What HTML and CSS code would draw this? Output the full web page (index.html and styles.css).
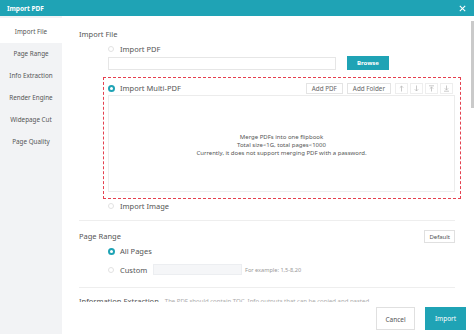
FILE: index.html
```html
<!DOCTYPE html>
<html>
<head>
<meta charset="utf-8">
<link rel="stylesheet" href="styles.css">
</head>
<body>
<div class="window">
  <div class="titlebar">
    <span class="title">Import PDF</span>
    <svg class="close" width="7" height="7" viewBox="0 0 7 7"><path d="M0.8 0.8L6.2 6.2M6.2 0.8L0.8 6.2" stroke="#fff" stroke-width="1.1"/></svg>
  </div>
  <div class="body">
    <div class="sidebar">
      <div class="nav-item active">Import File</div>
      <div class="nav-item">Page Range</div>
      <div class="nav-item">Info Extraction</div>
      <div class="nav-item">Render Engine</div>
      <div class="nav-item">Widepage Cut</div>
      <div class="nav-item">Page Quality</div>
    </div>
    <div class="main">
      <div class="scroll">
        <div class="section-title">Import File</div>
        <div class="radio-row indent"><span class="radio"></span>Import PDF</div>
        <div class="file-row indent">
          <div class="file-input"></div>
          <div class="btn-primary-sm">Browse</div>
        </div>
        <div class="dashed">
          <div class="multi-head">
            <span class="radio checked"></span><span class="radio-text">Import Multi-PDF</span>
            <div class="tools">
              <span class="tool-btn">Add PDF</span>
              <span class="tool-btn">Add Folder</span>
              <span class="icon-btn"><svg width="7" height="7" viewBox="0 0 7 7"><path d="M3.5 6.5V1M1.8 2.7L3.5 1L5.2 2.7" stroke="#bbb" stroke-width="0.8" fill="none"/></svg></span>
              <span class="icon-btn"><svg width="7" height="7" viewBox="0 0 7 7"><path d="M3.5 0.5V6M1.8 4.3L3.5 6L5.2 4.3" stroke="#bbb" stroke-width="0.8" fill="none"/></svg></span>
              <span class="icon-btn"><svg width="7" height="7" viewBox="0 0 7 7"><path d="M1 0.8H6M3.5 6.5V2M1.8 3.7L3.5 2L5.2 3.7" stroke="#bbb" stroke-width="0.8" fill="none"/></svg></span>
              <span class="icon-btn"><svg width="7" height="7" viewBox="0 0 7 7"><path d="M1 6.2H6M3.5 0.5V5M1.8 3.3L3.5 5L5.2 3.3" stroke="#bbb" stroke-width="0.8" fill="none"/></svg></span>
            </div>
          </div>
          <div class="list-box">
            <p>Merge PDFs into one flipbook</p>
            <p>Total size&lt;1G, total pages&lt;1000</p>
            <p>Currently, it does not support merging PDF with a password.</p>
          </div>
        </div>
        <div class="radio-row indent img-row"><span class="radio"></span>Import Image</div>
        <div class="divider d1"></div>
        <div class="range-head">
          <span class="section-label">Page Range</span>
          <span class="btn-default">Default</span>
        </div>
        <div class="radio-row indent all-row"><span class="radio checked"></span>All Pages</div>
        <div class="radio-row indent custom-row"><span class="radio"></span><span class="custom-label">Custom</span><span class="custom-input"></span><span class="hint">For example: 1,5-8,20</span></div>
        <div class="divider d2"></div>
        <div class="info-row"><span class="info-label">Information Extraction</span><span class="info-hint">The PDF should contain TOC, Info outputs that can be copied and pasted.</span></div>
      </div>
      <div class="footer">
        <span class="btn-cancel">Cancel</span>
        <span class="btn-import">Import</span>
      </div>
      <div class="thumb"></div>
    </div>
  </div>
</div>
</body>
</html>
```
FILE: styles.css
```css
* { box-sizing: border-box; }
html, body { margin: 0; padding: 0; }
body {
  width: 474px;
  height: 334px;
  overflow: hidden;
  font-family: "Noto Sans", "Open Sans", sans-serif;
  color: #555;
  background: #fff;
}
.window {
  width: 474px;
  height: 334px;
  display: flex;
  flex-direction: column;
}
.titlebar {
  height: 16px;
  flex: none;
  background: #1fa3b5;
  display: flex;
  align-items: center;
  justify-content: space-between;
  padding: 0 8px 0 7px;
}
.title {
  color: #fff;
  font-size: 6.5px;
  font-weight: 700;
}
.close { display: block; }
.body {
  flex: 1;
  display: flex;
  min-height: 0;
}
.sidebar {
  width: 62px;
  flex: none;
  background: #f2f3f5;
  padding-top: 2px;
}
.nav-item {
  height: 22px;
  line-height: 22px;
  text-align: center;
  font-size: 6.3px;
  color: #555;
}
.nav-item.active { background: #fff; height: 25px; line-height: 28px; }
.main {
  flex: 1;
  display: flex;
  flex-direction: column;
  position: relative;
  min-width: 0;
}
.scroll {
  flex: 1;
  overflow: hidden;
  padding: 12px 19px 0 17px;
  min-height: 0;
}
.section-title {
  height: 12px;
  line-height: 12px;
  font-size: 7.5px;
  color: #555;
}
.radio-row {
  height: 12px;
  display: flex;
  align-items: center;
  font-size: 7.5px;
  color: #555;
  margin-top: 3px;
}
.indent { margin-left: 29px; }
.radio {
  width: 6px;
  height: 6px;
  border-radius: 50%;
  border: 0.8px solid #e2e2e2;
  background: #fff;
  margin-right: 6px;
  flex: none;
}
.radio.checked {
  width: 7px;
  height: 7px;
  border: 2px solid #1fa3b5;
  background: #fff;
  margin-right: 5px;
}
.file-row {
  height: 14px;
  margin-top: 1px;
  display: flex;
  align-items: flex-start;
}
.file-input {
  width: 228px;
  height: 13px;
  margin-top: 1px;
  border: 0.8px solid #e6e6e6;
}
.btn-primary-sm {
  margin-left: 11px;
  width: 42px;
  height: 14px;
  background: #1fa3b5;
  color: #fff;
  font-size: 6px;
  font-weight: 700;
  text-align: center;
  line-height: 14px;
}
.dashed {
  margin: 7px -6px 0 24px;
  height: 122px;
  border: 1px dashed #e5404f;
  padding: 4px 5px 0 4px;
}
.multi-head {
  height: 12px;
  display: flex;
  align-items: center;
  font-size: 7.5px;
  color: #555;
}
.radio-text { flex: none; }
.tools {
  margin-left: auto;
  display: flex;
  align-items: center;
  gap: 2px;
  margin-right: 2px;
}
.tool-btn {
  height: 11px;
  line-height: 10px;
  border: 0.8px solid #e4e4e4;
  font-size: 6.3px;
  color: #666;
  padding: 0 5px;
  margin-right: 2px;
}
.icon-btn {
  width: 13px;
  height: 11px;
  border: 0.8px solid #eee;
  display: flex;
  align-items: center;
  justify-content: center;
}
.icon-btn svg { display: block; }
.list-box {
  margin-top: 1px;
  height: 97px;
  border: 0.8px solid #ececec;
  display: flex;
  flex-direction: column;
  justify-content: center;
  align-items: center;
  padding-top: 2px;
}
.list-box p {
  margin: 0;
  font-size: 6px;
  line-height: 8px;
  color: #555;
  text-align: center;
}
.img-row { margin-top: 1px; }
.divider {
  height: 1px;
  background: #eeeeee;
}
.d1 { margin-top: 8px; }
.range-head {
  margin-top: 8px;
  height: 14px;
  display: flex;
  align-items: center;
  justify-content: space-between;
}
.section-label { font-size: 7.5px; color: #555; }
.btn-default {
  height: 13px;
  line-height: 12px;
  border: 0.8px solid #e0e0e0;
  font-size: 6px;
  color: #555;
  padding: 0 4px;
}
.all-row { margin-top: 2px; }
.custom-row { margin-top: 6px; height: 13px; }
.custom-label { width: 33px; flex: none; }
.custom-input {
  width: 89px;
  height: 11px;
  background: #f5f6f8;
  border: 0.8px solid #eceef1;
  flex: none;
}
.hint {
  margin-left: 3px;
  font-size: 5.6px;
  color: #999;
}
.d2 { margin-top: 11px; }
.info-row {
  margin-top: 7px;
  height: 12px;
  display: flex;
  align-items: center;
  white-space: nowrap;
}
.info-label { font-size: 7.5px; color: #555; }
.info-hint { font-size: 6px; color: #aaa; margin-left: 6px; }
.footer {
  height: 32px;
  flex: none;
  background: #fff;
  display: flex;
  align-items: center;
  justify-content: flex-end;
  padding: 0 8px 0 0;
  gap: 10px;
}
.btn-cancel, .btn-import {
  height: 23px;
  line-height: 23px;
  font-size: 6.5px;
  text-align: center;
}
.btn-cancel {
  width: 39px;
  border: 0.8px solid #e0e0e0;
  color: #555;
}
.btn-import {
  width: 41px;
  background: #1fa3b5;
  color: #fff;
}
.thumb {
  position: absolute;
  right: 0;
  top: 5px;
  width: 3px;
  height: 87px;
  background: #cacaca;
}
```
